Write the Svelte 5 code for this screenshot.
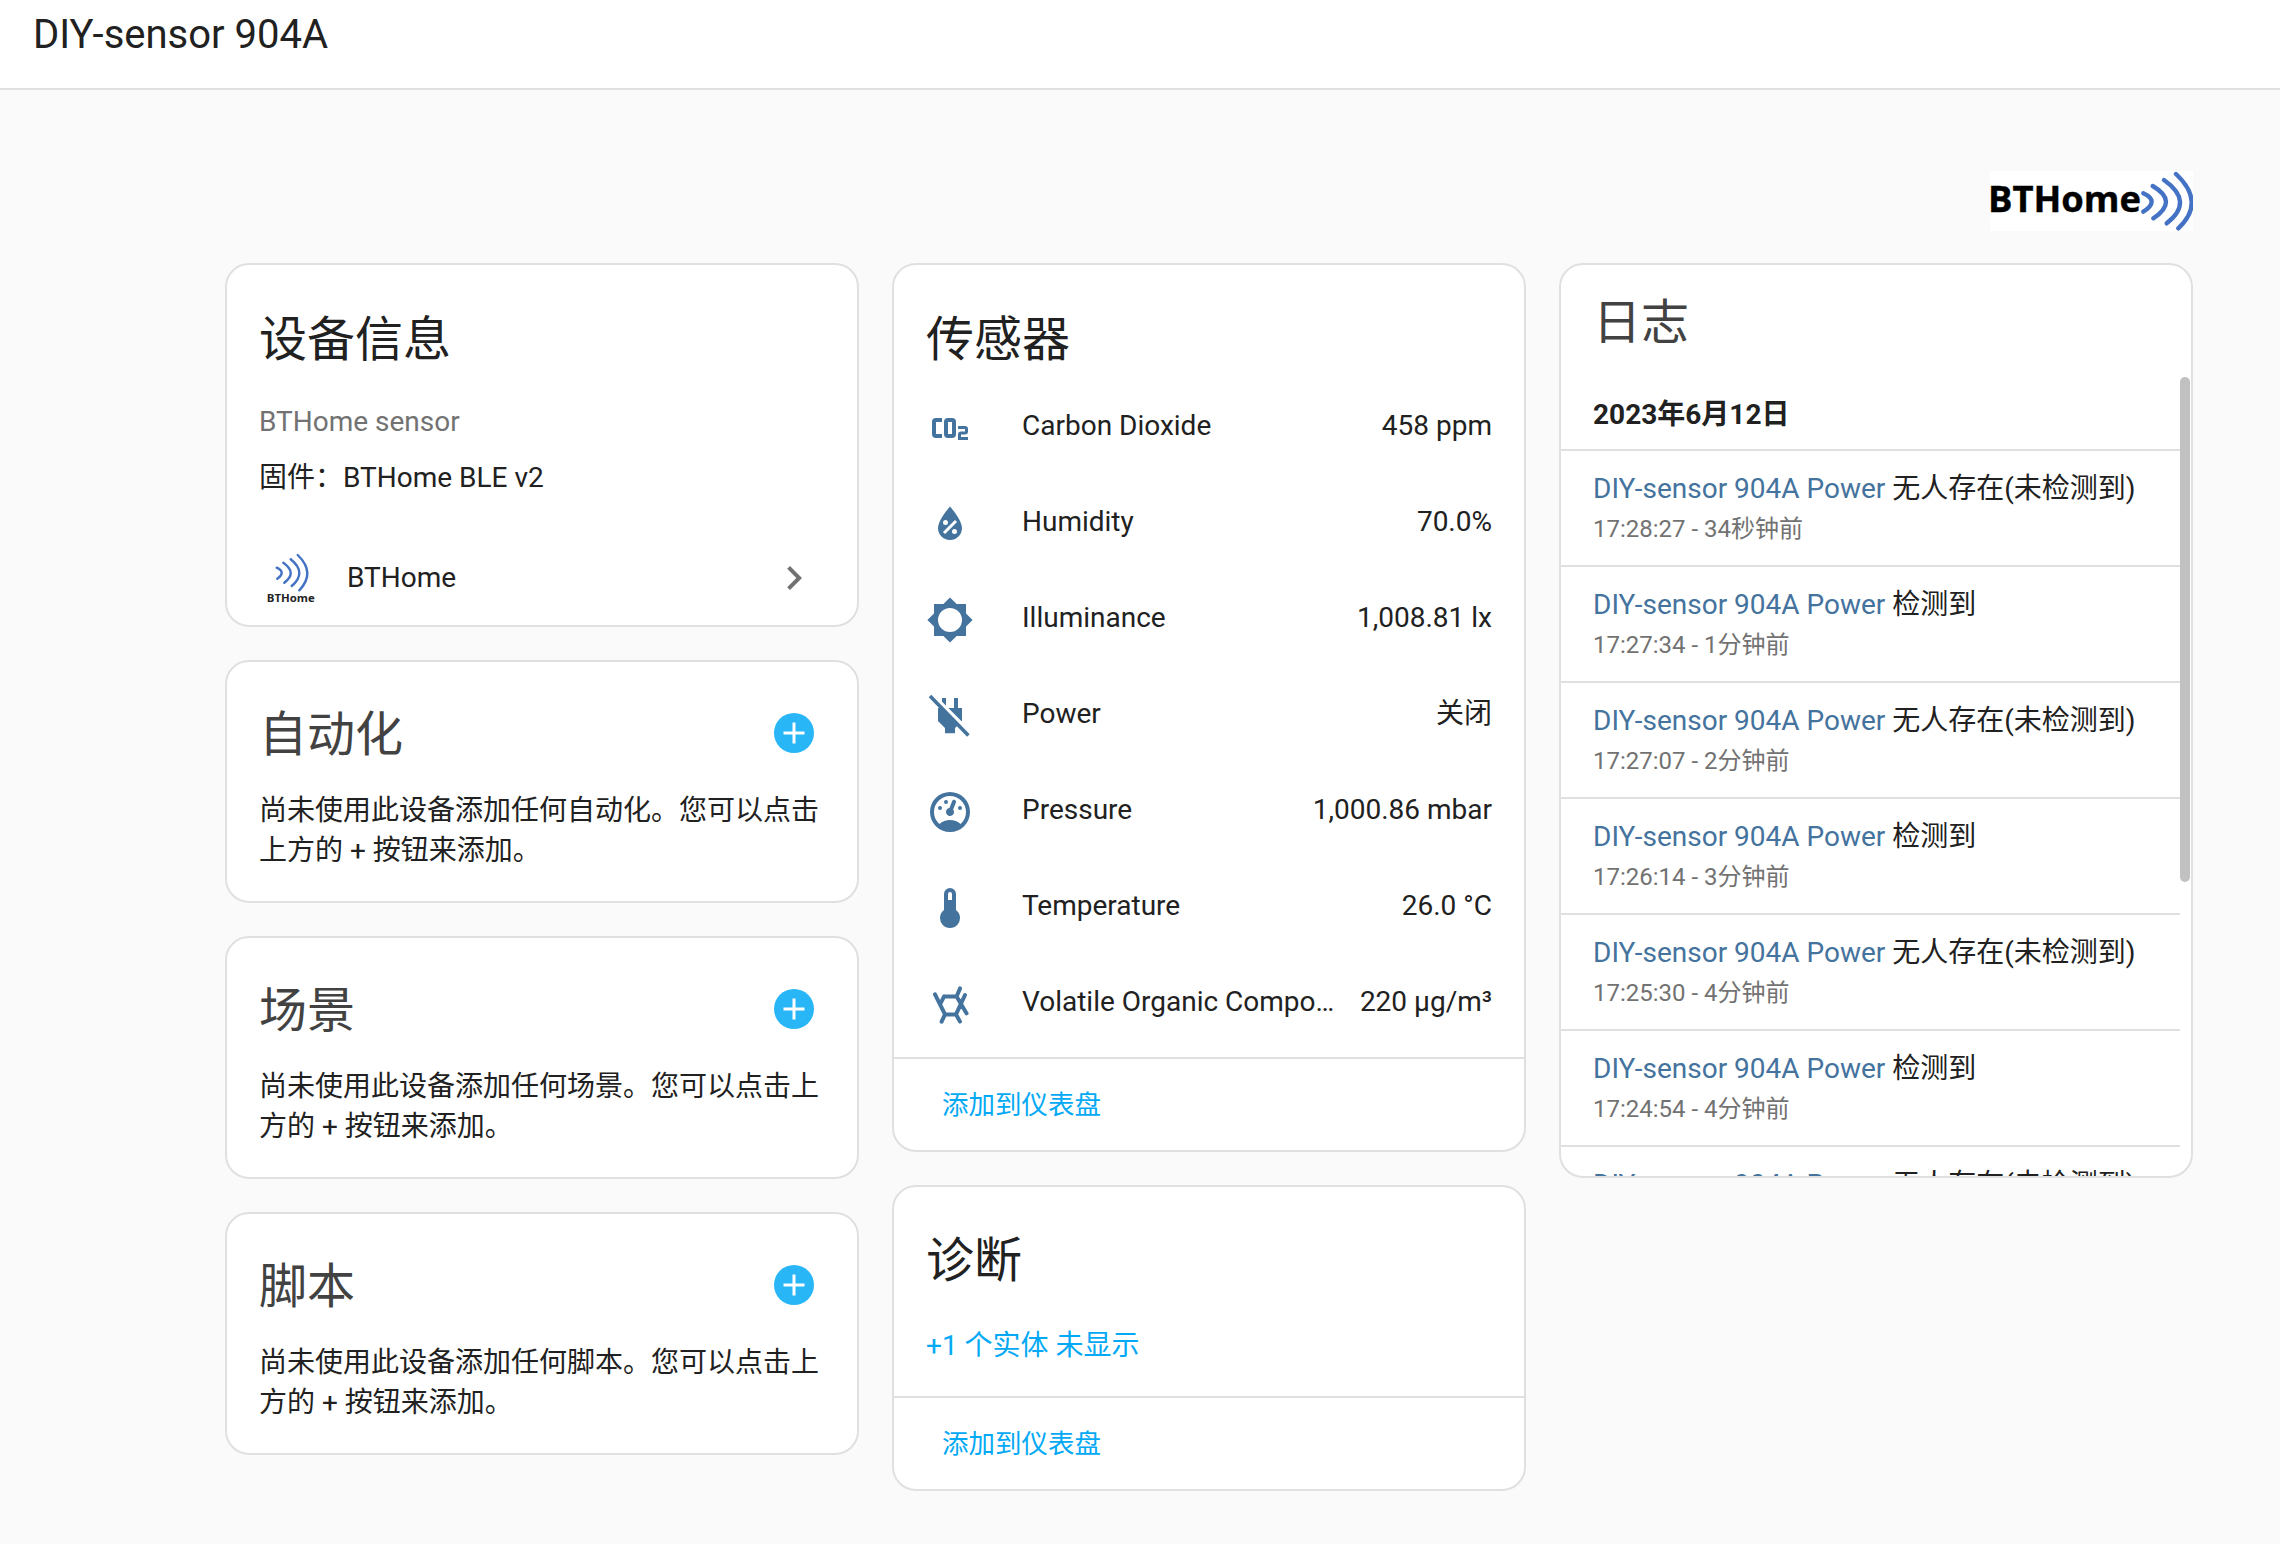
<script>
  const sensors = [
    { name: 'Carbon Dioxide', value: '458 ppm', icon: 'co2' },
    { name: 'Humidity', value: '70.0%', icon: 'humidity' },
    { name: 'Illuminance', value: '1,008.81 lx', icon: 'sun' },
    { name: 'Power', value: '关闭', icon: 'plug' },
    { name: 'Pressure', value: '1,000.86 mbar', icon: 'gauge' },
    { name: 'Temperature', value: '26.0 °C', icon: 'temp' },
    { name: 'Volatile Organic Compounds', value: '220 µg/m³', icon: 'voc' }
  ];
  const paths = {
    co2: 'M5,7A2,2 0 0,0 3,9V15A2,2 0 0,0 5,17H8V15H5V9H8V7H5M11,7A2,2 0 0,0 9,9V15A2,2 0 0,0 11,17H13A2,2 0 0,0 15,15V9A2,2 0 0,0 13,7H11M11,9H13V15H11V9M16,11V12.5H19.5V13.8H17.5A1.5,1.5 0 0,0 16,15.3V18H21V16.5H17.5V15.3H19.5A1.5,1.5 0 0,0 21,13.8V12.5A1.5,1.5 0 0,0 19.5,11H16Z',
    humidity: 'M12,3.25C12,3.25 6,10 6,14C6,17.32 8.69,20 12,20A6,6 0 0,0 18,14C18,10 12,3.25 12,3.25M14.47,9.97L15.53,11.03L9.53,17.03L8.47,15.97M9.75,10A1.25,1.25 0 0,1 11,11.25A1.25,1.25 0 0,1 9.75,12.5A1.25,1.25 0 0,1 8.5,11.25A1.25,1.25 0 0,1 9.75,10M14.25,14.5A1.25,1.25 0 0,1 15.5,15.75A1.25,1.25 0 0,1 14.25,17A1.25,1.25 0 0,1 13,15.75A1.25,1.25 0 0,1 14.25,14.5Z',
    sun: 'M20,15.31L23.31,12L20,8.69V4H15.31L12,0.69L8.69,4H4V8.69L0.69,12L4,15.31V20H8.69L12,23.31L15.31,20H20V15.31M12,18A6,6 0 0,1 6,12A6,6 0 0,1 12,6A6,6 0 0,1 18,12A6,6 0 0,1 12,18Z',
    gauge: 'M12,2A10,10 0 0,0 2,12A10,10 0 0,0 12,22A10,10 0 0,0 22,12A10,10 0 0,0 12,2M12,4A8,8 0 0,1 20,12C20,14.4 19,16.5 17.3,18C15.9,16.7 14,16 12,16C10,16 8.2,16.7 6.7,18C5,16.5 4,14.4 4,12A8,8 0 0,1 12,4M14,5.89C13.62,5.9 13.26,6.15 13.1,6.54L11.81,9.77L11.71,10C11,10.13 10.41,10.6 10.14,11.26C9.73,12.29 10.23,13.45 11.26,13.86C12.29,14.27 13.45,13.77 13.86,12.74C14.12,12.08 14,11.32 13.57,10.76L13.67,10.5L14.96,7.29L14.97,7.26C15.17,6.75 14.92,6.17 14.41,5.96C14.28,5.91 14.15,5.89 14,5.89M10,6A1,1 0 0,0 9,7A1,1 0 0,0 10,8A1,1 0 0,0 11,7A1,1 0 0,0 10,6M7,9A1,1 0 0,0 6,10A1,1 0 0,0 7,11A1,1 0 0,0 8,10A1,1 0 0,0 7,9M17,9A1,1 0 0,0 16,10A1,1 0 0,0 17,11A1,1 0 0,0 18,10A1,1 0 0,0 17,9Z',
    temp: 'M15 13V5A3 3 0 0 0 9 5V13A5 5 0 1 0 15 13M12 4A1 1 0 0 1 13 5V8H11V5A1 1 0 0 1 12 4Z'
  };
  const extras = [
    { title: '自动化', text: '尚未使用此设备添加任何自动化。您可以点击上方的 + 按钮来添加。' },
    { title: '场景', text: '尚未使用此设备添加任何场景。您可以点击上方的 + 按钮来添加。' },
    { title: '脚本', text: '尚未使用此设备添加任何脚本。您可以点击上方的 + 按钮来添加。' }
  ];
  const absent = '无人存在(未检测到)';
  const present = '检测到';
  const logs = [
    { state: absent, time: '17:28:27 - 34秒钟前' },
    { state: present, time: '17:27:34 - 1分钟前' },
    { state: absent, time: '17:27:07 - 2分钟前' },
    { state: present, time: '17:26:14 - 3分钟前' },
    { state: absent, time: '17:25:30 - 4分钟前' },
    { state: present, time: '17:24:54 - 4分钟前' },
    { state: absent, time: '17:24:10 - 5分钟前' }
  ];
</script>

<div class="page">
  <header class="topbar"><span class="page-title">DIY-sensor 904A</span></header>
  <main class="main">
    <div class="logo-row">
      <svg class="logo" width="203" height="60" viewBox="0 0 203 60">
        <rect width="203" height="60" fill="#fff" />
        <text x="-2" y="40.7" class="logo-text" textLength="153" lengthAdjust="spacingAndGlyphs">BTHome</text>
        <g class="arcs-big">
          <path d="M153.3 22.3Q170 29.9 153.3 40.7" />
          <path d="M162.7 15Q189 30.2 163.3 47.3" />
          <path d="M174 9Q204.7 30.7 176.7 52.3" />
          <path d="M186 3Q216.2 31.2 188.3 57.3" />
        </g>
      </svg>
    </div>
    <div class="grid">
      <div class="col">
        <section class="card info">
          <h1 class="card-title main-title">设备信息</h1>
          <div class="model">BTHome sensor</div>
          <div class="firmware">固件：BTHome BLE v2</div>
          <div class="integration">
            <svg class="int-logo" width="64" height="64" viewBox="0 0 64 64">
              <g class="arcs-small">
                <path d="M17.7 21.7Q27.4 26.2 18.3 32.7" />
                <path d="M24.3 16.7Q38.6 26.7 25.3 36.7" />
                <path d="M31.7 13.3Q48.4 26.7 32.7 40" />
                <path d="M38.7 9Q57.1 26.7 40.3 44.3" />
              </g>
              <text x="31.8" y="55.7" class="int-text" text-anchor="middle" textLength="48" lengthAdjust="spacingAndGlyphs">BTHome</text>
            </svg>
            <span class="int-name">BTHome</span>
            <svg class="chevron" width="48" height="48" viewBox="0 0 24 24"><path d="M8.59,16.58L13.17,12L8.59,7.41L10,6L16,12L10,18L8.59,16.58Z" /></svg>
          </div>
        </section>
        {#each extras as e}
          <section class="card extra">
            <div class="extra-head">
              <h2 class="card-title soft">{e.title}</h2>
              <span class="fab">
                <svg width="36" height="36" viewBox="0 0 24 24"><path d="M19,13H13V19H11V13H5V11H11V5H13V11H19V13Z" /></svg>
              </span>
            </div>
            <p class="extra-text">{e.text}</p>
          </section>
        {/each}
      </div>

      <div class="col">
        <section class="card">
          <h1 class="card-title main-title">传感器</h1>
          <div class="sensors">
            {#each sensors as s}
              <div class="sensor">
                <svg class="s-icon" width="48" height="48" viewBox="0 0 24 24">
                  {#if s.icon === 'plug'}
                    <path d="M8,3V8H6V14.5L9.5,18V20.6H14.5V18L18,14.5V8H16V3H14V8H10V3H8Z" />
                    <path class="slash-gap" d="M3.2,1.2L22.6,20.8" />
                    <path class="slash" d="M2,2L21.2,21.8" />
                  {:else if s.icon === 'voc'}
                    <path class="voc" d="M4.5,7.2L9.5,17.2M9,8.3L7,12.2M9,8.3H15.3M15.3,8.3L17,4.2M15.3,8.3L20.3,16.7M19.5,7.5L15,17.2M15,17.2L17,20.8M9.5,17.2H15M9.5,17.2L7.8,20.8" />
                  {:else}
                    <path fill-rule="evenodd" d={paths[s.icon]} />
                  {/if}
                </svg>
                <span class="s-name">{s.name}</span>
                <span class="s-value">{s.value}</span>
              </div>
            {/each}
          </div>
          <div class="footer"><span class="action">添加到仪表盘</span></div>
        </section>
        <section class="card diag">
          <h1 class="card-title">诊断</h1>
          <div class="hidden-link">+1 个实体 未显示</div>
          <div class="footer"><span class="action">添加到仪表盘</span></div>
        </section>
      </div>

      <div class="col">
        <section class="card log">
          <h2 class="card-title soft log-title">日志</h2>
          <div class="log-date">2023年6月12日</div>
          {#each logs as l}
            <div class="log-row">
              <div class="log-main"><span class="log-entity">DIY-sensor 904A Power</span> {l.state}</div>
              <div class="log-time">{l.time}</div>
            </div>
          {/each}
          <div class="scrollthumb"></div>
        </section>
      </div>
    </div>
  </main>
</div>

<style>
  :global(body) {
    margin: 0;
    background: #fafafa;
  }
  .page {
    min-height: 1544px;
    font-family: Roboto, "Noto Sans CJK SC", sans-serif;
    color: #212121;
    font-size: 28px;
    line-height: 40px;
  }
  .topbar {
    height: 88px;
    background: #fff;
    border-bottom: 2px solid #e0e0e0;
    padding: 0 33px;
  }
  .page-title {
    display: block;
    font-size: 40px;
    line-height: 70px;
  }
  .main {
    padding: 0 87px 0 225px;
  }
  .logo-row {
    display: flex;
    justify-content: flex-end;
    padding-top: 81px;
    margin-bottom: 32px;
  }
  .logo {
    display: block;
  }
  .logo-text {
    font-family: "Open Sans", sans-serif;
    font-weight: 700;
    font-size: 35px;
    fill: #000;
    stroke: #000;
    stroke-width: 0.4;
  }
  .arcs-big path {
    fill: none;
    stroke: #4472c4;
    stroke-width: 4.4;
    stroke-linecap: round;
  }
  .arcs-small path {
    fill: none;
    stroke: #4472c4;
    stroke-width: 2.4;
    stroke-linecap: round;
  }
  .int-text {
    font-family: "Open Sans", sans-serif;
    font-weight: 700;
    font-size: 11px;
    fill: #222;
  }
  .grid {
    display: grid;
    grid-template-columns: repeat(3, minmax(0, 1fr));
    gap: 33px;
    align-items: start;
  }
  .col {
    display: flex;
    flex-direction: column;
    gap: 33px;
    min-width: 0;
  }
  .card {
    box-sizing: border-box;
    background: #fff;
    border: 2px solid #e0e0e0;
    border-radius: 24px;
    overflow: hidden;
  }
  .card-title {
    margin: 0;
    padding: 42px 32px 0;
    font-size: 48px;
    line-height: 64px;
    font-weight: 400;
    color: #212121;
  }
  .card-title.main-title {
    padding-top: 43px;
  }
  .card-title.soft {
    color: #424242;
  }
  .model {
    padding: 0 32px;
    margin-top: 30px;
    color: #727272;
  }
  .firmware {
    padding: 0 32px;
    margin-top: 16px;
  }
  .integration {
    display: flex;
    align-items: center;
    height: 95px;
    margin-top: 32px;
    padding: 0 39px 0 32px;
  }
  .int-logo {
    flex: none;
    margin-right: 24px;
  }
  .int-name {
    flex: 1;
  }
  .chevron {
    fill: #727272;
  }
  .extra {
    height: 243px;
  }
  .extra-head {
    display: flex;
    align-items: center;
    justify-content: space-between;
    padding: 38px 43px 0 0;
  }
  .extra-head .card-title {
    padding-top: 3px;
  }
  .fab {
    width: 40px;
    height: 40px;
    border-radius: 50%;
    background: #29b6f6;
    display: flex;
    align-items: center;
    justify-content: center;
    fill: #fff;
    margin-top: -1px;
  }
  .extra-text {
    margin: 24px 0 0;
    padding: 0 32px;
    color: #212121;
  }
  .sensors {
    margin-top: 8px;
  }
  .sensor {
    display: flex;
    align-items: center;
    height: 96px;
    padding: 0 32px;
  }
  .s-icon {
    flex: none;
    margin-right: 48px;
    fill: #44739e;
  }
  .s-name {
    flex: 1;
    min-width: 0;
    white-space: nowrap;
    overflow: hidden;
    text-overflow: ellipsis;
    margin-top: -5px;
  }
  .s-value {
    flex: none;
    margin-left: 16px;
    margin-top: -5px;
    white-space: nowrap;
  }
  .slash {
    fill: none;
    stroke: #44739e;
    stroke-width: 1.8;
  }
  .slash-gap {
    fill: none;
    stroke: #fff;
    stroke-width: 1.8;
  }
  .voc {
    fill: none;
    stroke: #44739e;
    stroke-width: 2;
    stroke-linecap: round;
  }
  .footer {
    border-top: 2px solid #e0e0e0;
    margin-top: 5px;
    height: 91px;
    display: flex;
    align-items: center;
    padding-left: 48px;
  }
  .action {
    color: #03a9f4;
    font-size: 26.5px;
  }
  .hidden-link {
    padding: 0 32px;
    margin-top: 33px;
    margin-bottom: 30px;
    color: #03a9f4;
  }
  .log {
    height: 915px;
    position: relative;
  }
  .log .log-title {
    padding-top: 26px;
  }
  .log-date {
    padding: 40px 32px 14px;
    margin-right: 11px;
    font-weight: 700;
    border-bottom: 2px solid #e0e0e0;
  }
  .log-row {
    box-sizing: border-box;
    height: 116px;
    margin-right: 11px;
    padding: 18px 32px 0;
    border-bottom: 2px solid #e0e0e0;
    white-space: nowrap;
  }
  .log-entity {
    color: #44739e;
  }
  .log-time {
    font-size: 24px;
    color: #727272;
  }
  .scrollthumb {
    position: absolute;
    top: 112px;
    right: 1px;
    width: 10px;
    height: 505px;
    border-radius: 5px;
    background: #c1c1c1;
  }
</style>
